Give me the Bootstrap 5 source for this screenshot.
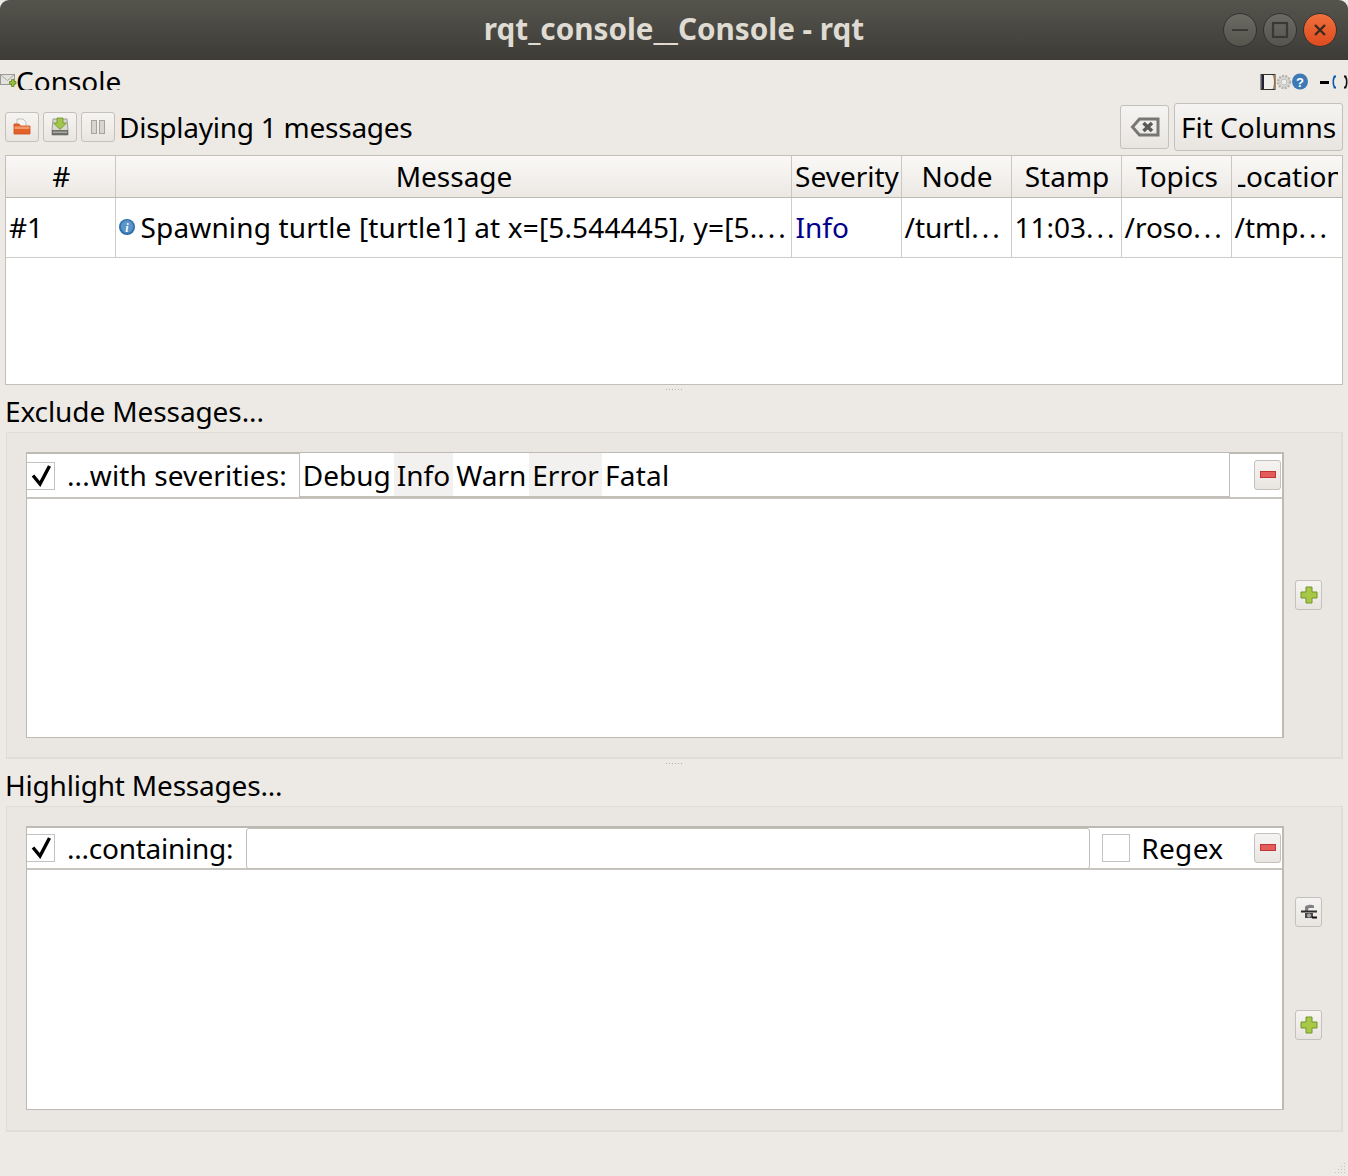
<!DOCTYPE html>
<html lang="en">
<head>
<meta charset="utf-8">
<title>rqt_console__Console - rqt</title>
<link href="https://cdn.jsdelivr.net/npm/bootstrap@5.3.0/dist/css/bootstrap.min.css" rel="stylesheet">
<style>
html,body{margin:0;height:1176px;overflow:hidden;background:#edeae6}
body{font-family:"Noto Sans","Liberation Sans",sans-serif;font-size:28px;color:#000;line-height:1}
.app{width:1348px;height:1176px;position:relative;overflow:hidden}
.titlebar{height:60px;background:linear-gradient(#55544c,#3c3b37);border-radius:9px 9px 0 0;color:#dfdbd2;font-weight:700;font-size:29.7px;padding-bottom:2px;position:relative}
.wm{position:absolute;right:11px;top:13px;gap:6px}
.wmb{width:34px;height:34px;border-radius:50%;border:1px solid #33322e;background:linear-gradient(#6b6a63,#55544d);display:flex;align-items:center;justify-content:center}
.wmb.closer{background:linear-gradient(#f0703c,#dd4b1e)}
.dockrow{height:30px;margin-bottom:13px;padding-top:7px;overflow:hidden}
.dockname{height:23px;overflow:hidden;line-height:29px;margin-left:-1px}
.dockicons{display:flex;align-items:flex-start;padding-top:6px}
.mailic{margin-top:6px;flex:none}
.toolbar{height:48px;padding:0 5px;margin-bottom:4px}
.tb{width:34px;height:30px;padding:0;margin-right:4px;background:linear-gradient(#f6f4f2,#e8e5e1);border:1px solid #c4c1bc;border-radius:3px;display:flex;align-items:center;justify-content:center}
.tb:hover{background:#f0eeeb}
.tb-back{width:49px;height:44px;margin-right:5px}
.tb-fit{width:169px;height:48px;font-size:28px;margin:0;color:#000}
.tb-sq{width:27px;height:30px;margin:0}
#disp{letter-spacing:-.25px;margin-top:-1px}
.logtbl{margin:0 5px;width:1338px;height:230px;background:#fff;border:1px solid #c2beb8;overflow:hidden}
.qtable{table-layout:fixed;width:1336px;margin:0;border-collapse:collapse;color:#000}
.c-num{width:109px}.c-msg{width:676px}.c-std{width:110px}.c-loc{width:111px}
.qtable th{height:41px;padding:0 0 0 2px;font-weight:400;text-align:center;background:linear-gradient(#faf8f6,#ebe8e4);border-right:1px solid #cbc8c3;border-bottom:1px solid #bdb9b3;overflow:hidden;white-space:nowrap;vertical-align:middle}
.qtable td{height:60px;padding:0 3px;border-right:1px solid #cfcdc9;border-bottom:1px solid #cfcdc9;overflow:hidden;white-space:nowrap;vertical-align:middle}
.qtable td.infosev{color:#00008b;padding-left:4px}
.hclip{display:flex;justify-content:center;overflow:hidden;line-height:1.4;margin:0 auto}
.hclip-sev{width:106px}
.hclip-loc{width:100px}
.msgcell{gap:6px}
#spawn{letter-spacing:.15px}
.dots{letter-spacing:3px}
.grip{height:9px;gap:2px}
.grip i{display:block;width:1px;height:1px;background:#b5b1ab}
.seclabel{height:38px;padding:0 5px;line-height:35px}
#lab1{letter-spacing:-.1px}
#lab2{letter-spacing:-.2px}
.grp{margin:0 5px 0 6px;width:1337px;border:1px solid #e0ddd8;border-bottom-width:2px;border-right-width:2px;background:#eae7e2;padding:19px 0 19px 19px}
.grp1{height:327px}
.grp2{height:326px;padding-bottom:20px}
.qlist{width:1258px;background:#fff;border:1px solid #bdb9b3;border-top-width:2px;border-right-width:2px;flex:none}
.frow{border-bottom:2px solid #c8c5c0;background:#fff;position:relative}
.frow1{height:45px}
.frow2{height:42px}
.ck{width:28px;height:28px;border:1px solid #c6c3be;border-left-width:0;background:#fff;flex:none;display:flex;align-items:center;justify-content:center}
.ck-blank{border-left-width:1px}
.flabel{margin-left:12px;flex:none}
#wsev{letter-spacing:.1px;margin-top:-1px}
#cont{letter-spacing:-.25px;margin-top:-1px}
.sevbox{margin-left:12px;width:931px;height:45px;border:1px solid #c2beb8;border-top:0;border-bottom-width:2px;background:#fff;padding:0}
.sev{height:43px;display:flex;align-items:center;padding:0 3px}
.sev-alt{background:#f3f1ef}
.sev-last{letter-spacing:.25px}
.textin{margin-left:13px;width:844px;height:41px;border:1px solid #c2beb8;border-radius:3px;background:#fff}
.regex{margin-left:12px;gap:11px}
#rgx{letter-spacing:.3px}
.rmbtn{position:absolute;right:1px;top:6px}
.frow2 .rmbtn{top:5px}
.sidecol{width:59px;flex:none;padding-left:11px}
.side1{justify-content:center}
.side2{padding-top:71px;gap:83px}
.bottomgrip{position:absolute;right:2px;bottom:2px}
</style>
</head>
<body>
<div class="app">
  <div class="titlebar d-flex align-items-center justify-content-center">
    <span id="ttl">rqt_console__Console - rqt</span>
    <div class="wm d-flex">
      <div class="wmb"><svg width="18" height="18" viewBox="0 0 18 18"><rect x="1" y="8" width="16" height="2" fill="#3a3934"/></svg></div>
      <div class="wmb"><svg width="18" height="18" viewBox="0 0 18 18"><rect x="2" y="2" width="14" height="14" fill="none" stroke="#3a3934" stroke-width="2.2"/></svg></div>
      <div class="wmb closer"><svg width="18" height="18" viewBox="0 0 18 18"><path d="M4 4l10 10M14 4L4 14" stroke="#3c2a20" stroke-width="2.4"/></svg></div>
    </div>
  </div>

  <div class="dockrow d-flex justify-content-between">
    <div class="d-flex">
      <svg width="17" height="17" viewBox="0 0 17 17" class="mailic"><rect x="0.5" y="1.500" width="14" height="10" fill="#e4e2de" stroke="#9a9a96"/><path d="M1 2l6.500 5.500L14 2" fill="none" stroke="#a8a8a4"/><path d="M9.500 8.500h2V6.500h2.500v2h2v2.500h-2v2.500h-2.500V11h-2z" fill="#9dc13f" stroke="#5e8a1e" stroke-width=".8"/></svg>
      <div class="dockname">Console</div>
    </div>
    <div class="dockicons">
      <svg width="90" height="18" viewBox="0 0 90 18">
        <rect x="3" y="1.500" width="14" height="15" fill="#f1efec" stroke="#333" stroke-width="1"/><rect x="3.500" y="2" width="2.500" height="14" fill="#223"/><path d="M15 2c2 3 2 11 0 14" stroke="#a86418" fill="none"/>
        <circle cx="26" cy="9" r="6" fill="#dedcd8" stroke="#b4b2ae" stroke-width="2.500" stroke-dasharray="2 1.200"/><circle cx="26" cy="9" r="3" fill="#f0eeeb" stroke="#bbb9b5"/>
        <circle cx="42" cy="8.500" r="8" fill="#3d7ab5"/><text x="42" y="13.500" font-size="13" font-weight="700" fill="#fff" text-anchor="middle" font-family="Liberation Sans">?</text>
        <rect x="62" y="8" width="9" height="3" fill="#000"/>
        <path d="M78 3.500h-1.500c-1.500 3-1.500 8 0 11H78" stroke="#0a58a8" stroke-width="1.800" fill="none"/><path d="M86 3.500h1.500c1.500 3 1.500 8 0 11H86" stroke="#111" stroke-width="1.800" fill="none"/>
      </svg>
    </div>
  </div>

  <div class="toolbar d-flex align-items-center">
    <button class="btn tb" type="button" aria-label="Open"><svg width="18" height="18" viewBox="0 0 18 18"><path d="M4 1h6l3 3v6H4z" fill="#f4f3f0" stroke="#b5b3ae" stroke-width=".8"/><path d="M1 6h5l1.500 2H17v8H1z" fill="#e4622a" stroke="#c44c14" stroke-width=".8"/><rect x="1.500" y="8.500" width="15" height="2.500" fill="#f19a6c"/></svg></button>
    <button class="btn tb" type="button" aria-label="Save"><svg width="20" height="20" viewBox="0 0 20 20"><path d="M3 2h14l1 11v5H2v-5z" fill="#d9d8d2" stroke="#8a8a84" stroke-width=".8"/><rect x="2" y="13" width="16" height="5" fill="#6f6f69"/><rect x="3" y="14.500" width="14" height="1.500" fill="#a9a9a3"/><path d="M7 1h6v5h3.500L10 12.500 3.500 6H7z" fill="#a3c64a" stroke="#6b9324" stroke-width=".8"/></svg></button>
    <button class="btn tb" type="button" aria-label="Pause"><svg width="16" height="16" viewBox="0 0 16 16"><rect x="1.500" y="1.500" width="5" height="13" fill="#d6d5d0" stroke="#a4a39e"/><rect x="9.500" y="1.500" width="5" height="13" fill="#d6d5d0" stroke="#a4a39e"/></svg></button>
    <span id="disp" class="flex-grow-1">Displaying 1 messages</span>
    <button class="btn tb tb-back" type="button" aria-label="Clear"><svg width="30" height="22" viewBox="0 0 30 22"><path d="M9.500 3H28v16H9.500L2.500 11z" fill="none" stroke="#777774" stroke-width="3"/><path d="M13.500 7l8.500 8M22 7l-8.500 8" stroke="#5a5a57" stroke-width="3.600"/></svg></button>
    <button class="btn tb tb-fit" type="button"><span id="fit">Fit Columns</span></button>
  </div>

  <div class="logtbl">
    <table class="qtable">
      <colgroup><col class="c-num"><col class="c-msg"><col class="c-std"><col class="c-std"><col class="c-std"><col class="c-std"><col class="c-loc"></colgroup>
      <thead><tr>
        <th>#</th><th>Message</th><th><div class="hclip hclip-sev"><span>Severity</span></div></th><th>Node</th><th>Stamp</th><th>Topics</th><th><div class="hclip hclip-loc"><span>Location</span></div></th>
      </tr></thead>
      <tbody><tr>
        <td>#1</td>
        <td><div class="d-flex align-items-center msgcell"><svg width="16" height="16" viewBox="0 0 16 16" class="flex-shrink-0"><circle cx="8" cy="8" r="8" fill="#2f6ea8"/><circle cx="8" cy="7.500" r="6.300" fill="#5a94c8"/><text x="8" y="13" font-size="12" font-weight="700" font-style="italic" fill="#fff" text-anchor="middle" font-family="Liberation Serif">i</text></svg><span id="spawn">Spawning turtle [turtle1] at x=[5.544445], y=[5.<span class="dots">...</span></span></div></td>
        <td class="infosev">Info</td><td>/turtl<span class="dots">...</span></td><td>11:03<span class="dots">...</span></td><td>/roso<span class="dots">...</span></td><td>/tmp<span class="dots">...</span></td>
      </tr></tbody>
    </table>
  </div>

  <div class="grip d-flex justify-content-center align-items-start pt-1"><i></i><i></i><i></i><i></i><i></i><i></i></div>
  <div class="seclabel" id="lab1">Exclude Messages...</div>

  <div class="grp grp1 d-flex">
    <div class="qlist">
      <div class="frow frow1 d-flex align-items-center">
        <span class="ck"><svg width="22" height="22" viewBox="0 0 22 22"><path d="M3 10.500l7 8.500L19.500 1" fill="none" stroke="#000" stroke-width="3.400"/></svg></span>
        <span class="flabel" id="wsev">...with severities:</span>
        <div class="sevbox d-flex">
          <span class="sev">Debug</span><span class="sev sev-alt">Info</span><span class="sev">Warn</span><span class="sev sev-alt">Error</span><span class="sev sev-last">Fatal</span>
        </div>
        <button class="btn tb tb-sq rmbtn" type="button" aria-label="Remove"><svg width="18" height="8" viewBox="0 0 18 8"><rect x="1.500" y=".5" width="15" height="6" fill="#e25c5c" stroke="#c23434"/></svg></button>
      </div>
    </div>
    <div class="sidecol d-flex flex-column side1">
      <button class="btn tb tb-sq" type="button" aria-label="Add"><svg width="18" height="18" viewBox="0 0 18 18"><path d="M6 1h6v5h5v6h-5v5H6v-5H1V6h5z" fill="#a9c747" stroke="#6e962a"/></svg></button>
    </div>
  </div>

  <div class="grip d-flex justify-content-center align-items-start pt-1"><i></i><i></i><i></i><i></i><i></i><i></i></div>
  <div class="seclabel" id="lab2">Highlight Messages...</div>

  <div class="grp grp2 d-flex">
    <div class="qlist">
      <div class="frow frow2 d-flex align-items-center">
        <span class="ck"><svg width="22" height="22" viewBox="0 0 22 22"><path d="M3 10.500l7 8.500L19.500 1" fill="none" stroke="#000" stroke-width="3.400"/></svg></span>
        <span class="flabel" id="cont">...containing:</span>
        <div class="textin" id="tin"></div>
        <div class="regex d-flex align-items-center"><span class="ck ck-blank"></span><span id="rgx">Regex</span></div>
        <button class="btn tb tb-sq rmbtn" type="button" aria-label="Remove"><svg width="18" height="8" viewBox="0 0 18 8"><rect x="1.500" y=".5" width="15" height="6" fill="#e25c5c" stroke="#c23434"/></svg></button>
      </div>
    </div>
    <div class="sidecol d-flex flex-column side2">
      <button class="btn tb tb-sq" type="button" aria-label="Highlight"><svg width="18" height="16" viewBox="0 0 18 16"><path d="M5 7V3.500C5 1 11 0 14 1.500V4H9.500C8.500 4 8 5 8 7z" fill="#808080"/><rect x="1" y="6.500" width="16" height="2" fill="#2c2c2c"/><path d="M5 9h8v5H5z" fill="#4a4a4a"/><circle cx="9" cy="11.500" r="2" fill="#aaa"/><rect x="12" y="12.500" width="5" height="2" fill="#111"/></svg></button>
      <button class="btn tb tb-sq" type="button" aria-label="Add"><svg width="18" height="18" viewBox="0 0 18 18"><path d="M6 1h6v5h5v6h-5v5H6v-5H1V6h5z" fill="#a9c747" stroke="#6e962a"/></svg></button>
    </div>
  </div>

  <svg class="bottomgrip" width="12" height="12" viewBox="0 0 12 12" fill="#c6c2bc"><rect x="10" y="1" width="1" height="1"/><rect x="7" y="4" width="1" height="1"/><rect x="10" y="4" width="1" height="1"/><rect x="4" y="7" width="1" height="1"/><rect x="7" y="7" width="1" height="1"/><rect x="10" y="7" width="1" height="1"/><rect x="1" y="10" width="1" height="1"/><rect x="4" y="10" width="1" height="1"/><rect x="7" y="10" width="1" height="1"/><rect x="10" y="10" width="1" height="1"/></svg>
</div>
<script src="https://cdn.jsdelivr.net/npm/bootstrap@5.3.0/dist/js/bootstrap.bundle.min.js"></script>
</body>
</html>
